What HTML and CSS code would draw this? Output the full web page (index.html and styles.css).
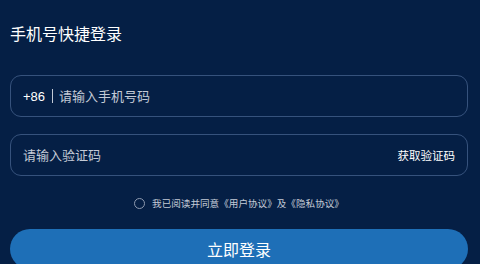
FILE: index.html
```html
<!DOCTYPE html>
<html lang="zh-CN">
<head>
  <meta charset="UTF-8" />
  <meta name="viewport" content="width=device-width, initial-scale=1.0"/>
  <title>手机号快捷登录</title>
  <link rel="stylesheet" href="styles.css">
</head>
<body>
  <div class="page">
    <h1 class="title">手机号快捷登录</h1>

    <div class="field phone">
      <span class="prefix">+86</span>
      <span class="divider"></span>
      <input class="input" type="tel" placeholder="请输入手机号码">
    </div>

    <div class="field code">
      <input class="input" type="text" placeholder="请输入验证码">
      <button class="get-code">获取验证码</button>
    </div>

    <label class="agree">
      <span class="radio"></span>
      <span class="agree-text">我已阅读并同意《用户协议》及《隐私协议》</span>
    </label>

    <button class="submit">立即登录</button>
  </div>
</body>
</html>
```

FILE: styles.css
```css
:root {
  --bg: #051f45;
  --line: #36527c;
  --text: #ffffff;
  --muted: #c3cad6;
  --accent: #1e6fb7;
}

* {
  margin: 0;
  padding: 0;
  box-sizing: border-box;
  font-family: 'Liberation Sans', 'Noto Sans CJK SC', sans-serif;
}

body {
  background: var(--bg);
  color: var(--text);
  height: 100vh;
  overflow: hidden;
}

.page {
  padding: 0 12px 0 10px;
}

.title {
  margin-top: 23px;
  font-size: 16px;
  line-height: 24px;
  font-weight: normal;
}

.field {
  display: flex;
  align-items: center;
  height: 42px;
  padding: 0 12px;
  border: 1px solid var(--line);
  border-radius: 11px;
}

.phone {
  margin-top: 28px;
}

.code {
  margin-top: 17px;
}

.prefix {
  font-size: 13px;
  color: var(--text);
}

.divider {
  width: 1px;
  height: 14px;
  margin: 0 6px 0 7px;
  background: var(--muted);
}

.input {
  flex: 1;
  min-width: 0;
  border: none;
  outline: none;
  background: transparent;
  font-size: 13px;
  color: var(--text);
}

.input::placeholder {
  color: var(--muted);
}

.get-code {
  border: none;
  background: transparent;
  font-size: 11.5px;
  color: var(--text);
  cursor: pointer;
}

.agree {
  display: flex;
  align-items: center;
  justify-content: center;
  gap: 7px;
  height: 20px;
  margin-top: 17px;
}

.radio {
  width: 11px;
  height: 11px;
  border: 1px solid #8e9ab0;
  border-radius: 50%;
}

.agree-text {
  font-size: 9.6px;
  color: var(--muted);
}

.submit {
  display: block;
  width: 100%;
  height: 40px;
  margin-top: 16px;
  border: none;
  border-radius: 20px;
  background: var(--accent);
  color: var(--text);
  font-size: 16px;
  cursor: pointer;
}
```
